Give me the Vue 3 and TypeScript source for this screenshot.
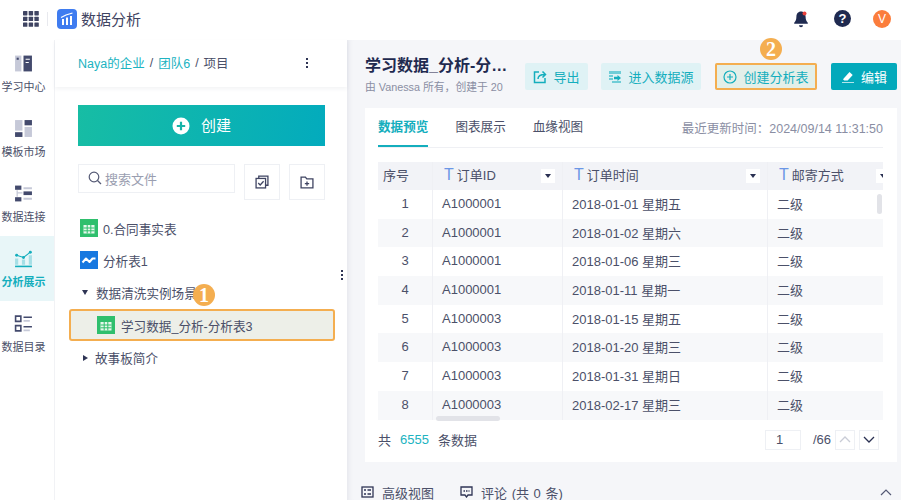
<template>
  <div class="page">
    <header class="topbar">
      <svg class="apps" width="16" height="16" viewBox="0 0 16 16" fill="#3f4462">
        <template v-for="y in [0, 5.7, 11.4]" :key="y">
          <rect v-for="x in [0, 5.7, 11.4]" :key="x" :x="x" :y="y" width="4.4" height="4.4" rx="0.6" />
        </template>
      </svg>
      <span class="top-sep"></span>
      <svg class="logo" width="20" height="20" viewBox="0 0 20 20">
        <rect width="20" height="20" rx="4" fill="#3f7cf0" />
        <path d="M4 8.5 L9 6 L15.5 4" stroke="#fff" stroke-width="1.3" fill="none" />
        <path d="M5 10h2v6H5zM9 8.5h2V16H9zM13 7h2v9h-2z" fill="#fff" />
      </svg>
      <span class="app-name">数据分析</span>
      <div class="top-right">
        <svg class="bell" width="16" height="18" viewBox="0 0 16 18">
          <path d="M8 1.5c-3 0-4.6 2.300-4.600 5.200 0 3.300-1.100 4.800-2.200 6v1h13.600v-1c-1.100-1.200-2.200-2.700-2.200-6C12.600 3.800 11 1.500 8 1.500z" fill="#1f2a50" />
          <path d="M6 15.200h4a2 2 0 0 1-4 0z" fill="#1f2a50" />
          <circle cx="11.500" cy="3.500" r="2" fill="#e8413c" />
        </svg>
        <span class="help">?</span>
        <span class="avatar">V</span>
      </div>
    </header>

    <div class="body">
      <nav class="side">
        <div v-for="n in navItems" :key="n.label" class="nav-item" :class="{ active: n.active }">
          <svg width="19" height="19" viewBox="0 0 18 18" v-html="n.icon"></svg>
          <span>{{ n.label }}</span>
        </div>
      </nav>

      <section class="files">
        <div class="crumbs">
          <span class="link">Naya的企业</span><span class="slash">/</span>
          <span class="link">团队6</span><span class="slash">/</span>
          <span>项目</span>
          <span class="dots"><i></i><i></i><i></i></span>
        </div>

        <button class="create">
          <svg width="18" height="18" viewBox="0 0 18 18">
            <circle cx="9" cy="9" r="8.500" fill="#fff" />
            <path d="M9 4.800v8.400M4.800 9h8.400" stroke="#17b3a8" stroke-width="2.200" />
          </svg>
          <span class="create-text">创建</span>
        </button>

        <div class="tools">
          <div class="search">
            <svg width="14" height="14" viewBox="0 0 14 14" fill="none" stroke="#555a75" stroke-width="1.200">
              <circle cx="6" cy="6" r="4.800" /><path d="M9.500 9.500L13 13" />
            </svg>
            <span>搜索文件</span>
          </div>
          <div class="tool-btn">
            <svg width="14" height="14" viewBox="0 0 13 13" fill="none" stroke="#3f4462" stroke-width="1.200">
              <path d="M3.500 2.800V1h8.500v8.500h-1.800" />
              <rect x="1" y="3.200" width="8.800" height="8.800" />
              <path d="M3 7.500l1.800 1.800L8 5.800" />
            </svg>
          </div>
          <div class="tool-btn">
            <svg width="14" height="13" viewBox="0 0 13 12" fill="none" stroke="#3f4462" stroke-width="1.200">
              <path d="M1 1h4l1.300 1.700H12V11H1z" />
              <path d="M6.500 5v4M4.500 7h4" />
            </svg>
          </div>
        </div>

        <ul class="tree">
          <li class="row file">
            <svg class="sheet" width="18" height="18" viewBox="0 0 18 18" v-html="sheetIcon"></svg>
            <span>0.合同事实表</span>
          </li>
          <li class="row file">
            <svg width="18" height="18" viewBox="0 0 18 18">
              <rect width="18" height="18" fill="#1778e0" />
              <path d="M2.500 11.500L6 7.500l3.500 3.500 3-3.500 3 0" stroke="#fff" stroke-width="2" stroke-linejoin="round" fill="none" />
            </svg>
            <span>分析表1</span>
          </li>
          <li class="row folder">
            <i class="tri down"></i>
            <span class="folder-name">数据清洗实例场景</span>
            <span class="mark mark-one">1</span>
          </li>
          <li class="row picked">
            <svg width="18" height="18" viewBox="0 0 18 18" v-html="sheetIcon"></svg>
            <span>学习数据_分析-分析表3</span>
          </li>
          <li class="row folder">
            <i class="tri right"></i>
            <span class="folder-name">故事板简介</span>
          </li>
        </ul>
        <span class="dots handle"><i></i><i></i><i></i></span>
      </section>

      <main class="detail">
        <div class="head">
          <div class="title-box">
            <h1>学习数据_分析-分析表3</h1>
            <p>由 Vanessa 所有，创建于 2024/09/14</p>
          </div>
          <div class="actions">
            <button class="act">
              <svg width="14" height="14" viewBox="0 0 14 14" fill="none" stroke="#14aebd" stroke-width="1.500">
                <path d="M6 2H1.500v10.500H12V8" /><path d="M5 9c0-3 2-4.500 7-4.500M9.500 1.500l3 3-3 3" />
              </svg>
              导出
            </button>
            <button class="act">
              <svg width="14" height="14" viewBox="0 0 14 14" fill="#14aebd">
                <path d="M1 1h12v3H1zM1 5h4v2H1zM1 8h4v2H1zM4 11h9v2H4z" opacity=".55" />
                <path d="M6 6.800h3.500V5L13 8l-3.500 3V9.200H6z" />
              </svg>
              进入数据源
            </button>
            <button class="act picked-act">
              <svg width="14" height="14" viewBox="0 0 14 14" fill="none" stroke="#14aebd" stroke-width="1.200">
                <circle cx="7" cy="7" r="6" /><path d="M7 4v6M4 7h6" />
              </svg>
              创建分析表
              <span class="mark mark-two">2</span>
            </button>
            <button class="act solid">
              <svg width="14" height="14" viewBox="0 0 14 14" fill="#fff">
                <path d="M8.500 2l3.200 3-5 5.500H3.200L2 9.300z" /><path d="M1 12h12v1H1z" opacity=".7" />
              </svg>
              编辑
            </button>
          </div>
        </div>

        <div class="card">
          <div class="tabs">
            <span v-for="(t, i) in tabs" :key="t" class="tab" :class="{ on: i === 0 }">{{ t }}</span>
            <span class="updated">最近更新时间：2024/09/14 11:31:50</span>
          </div>

          <div class="grid-wrap">
            <div class="line th">
              <div class="cell no">序号</div>
              <div v-for="c in columns" :key="c" class="cell">
                <span class="t-mark">T</span>
                <span>{{ c }}</span>
                <span class="drop"></span>
              </div>
            </div>
            <div v-for="r in rows" :key="r.no" class="line tr">
              <div class="cell no">{{ r.no }}</div>
              <div class="cell">{{ r.id }}</div>
              <div class="cell">{{ r.date }}</div>
              <div class="cell">二级</div>
            </div>
            <span class="bar-y"></span>
            <span class="bar-x"></span>
          </div>

          <div class="pager">
            <span>共</span><b>6555</b><span>条数据</span>
            <div class="pager-right">
              <span class="page-box">1</span>
              <span class="page-total">/66</span>
              <span class="arrow faint"><svg width="12" height="7" viewBox="0 0 12 7" fill="none" stroke="#c9ccd6" stroke-width="1.300"><path d="M1 6l5-5 5 5" /></svg></span>
              <span class="arrow"><svg width="12" height="7" viewBox="0 0 12 7" fill="none" stroke="#2a3052" stroke-width="1.300"><path d="M1 1l5 5 5-5" /></svg></span>
            </div>
          </div>
        </div>

        <div class="foot">
          <svg width="13" height="12" viewBox="0 0 13 12" fill="none" stroke="#2f3555" stroke-width="1.300">
            <rect x="1" y="1" width="11" height="10" /><path d="M3 4h2M6.500 4H10M3 8h2M6.500 8H10" />
          </svg>
          <span>高级视图</span>
          <svg class="foot-second" width="13" height="12" viewBox="0 0 13 12" fill="none" stroke="#2f3555" stroke-width="1.300">
            <path d="M1 1h11v8H8l-1.500 2L5 9H1z" /><path d="M3.500 5h6" stroke-dasharray="1.500 1" />
          </svg>
          <span class="comments">评论 (共 0 条)</span>
          <svg class="foot-up" width="12" height="7" viewBox="0 0 12 7" fill="none" stroke="#555a75" stroke-width="1.200"><path d="M1 6l5-5 5 5" /></svg>
        </div>
      </main>
    </div>
  </div>
</template>

<script setup lang="ts">
const sheetIcon =
  '<rect width="18" height="18" fill="#2fbf6d"/><path d="M3.500 6h11v8.500h-11z" fill="#e6f7ec"/><path d="M3.500 9h11M3.500 11.800h11M7.200 6v8.500M10.800 6v8.500" stroke="#2fbf6d" stroke-width="1"/>'

const navItems = [
  {
    label: '学习中心',
    icon: '<rect x="1" y="1.500" width="6" height="15" fill="#c6c9d8"/><rect x="9" y="1.500" width="8" height="15" fill="#434a6d"/><rect x="2.500" y="3.500" width="2" height="2" fill="#434a6d"/><path d="M11 5h4M11 8h3" stroke="#fff"/>',
  },
  {
    label: '模板市场',
    icon: '<rect x="1" y="1" width="7" height="10" fill="#c6c9d8"/><rect x="10" y="1" width="7" height="5" fill="#434a6d"/><rect x="1" y="12.500" width="7" height="4.500" fill="#434a6d"/><rect x="10" y="7.500" width="7" height="9.500" fill="#c6c9d8"/>',
  },
  {
    label: '数据连接',
    icon: '<rect x="1" y="1.500" width="6" height="4" fill="#434a6d"/><rect x="1" y="12.500" width="6" height="4" fill="#434a6d"/><rect x="9" y="7" width="8" height="3.500" fill="#434a6d"/><path d="M9 3h8v2H9zM9 13h8v2H9z" fill="#c6c9d8"/><path d="M3 6v6M3 8.500h5" stroke="#c6c9d8" stroke-width="1.200" fill="none"/>',
  },
  {
    label: '分析展示',
    active: true,
    icon: '<path d="M1 9h3v6H1zM7.500 10h3v5h-3zM14 6h3v9h-3z" fill="#a5dfe6"/><path d="M1 16.500h16" stroke="#14aebd" stroke-width="1.500"/><path d="M2.500 6L9 8l6.500-5" stroke="#14aebd" fill="none"/><circle cx="2.500" cy="6" r="1.400" fill="#14aebd"/><circle cx="9" cy="8" r="1.400" fill="#14aebd"/><circle cx="15.500" cy="3" r="1.400" fill="#14aebd"/>',
  },
  {
    label: '数据目录',
    icon: '<path d="M1.500 2h5v5h-5zM1.500 11h5v5h-5z" fill="none" stroke="#434a6d" stroke-width="1.500"/><path d="M9 3h8M9 12h8" stroke="#434a6d" stroke-width="1.500"/><path d="M9 6.500h6M9 15.500h6" stroke="#c6c9d8" stroke-width="1.500"/>',
  },
]

const tabs = ['数据预览', '图表展示', '血缘视图']
const columns = ['订单ID', '订单时间', '邮寄方式']

interface OrderRow {
  no: number
  id: string
  date: string
}

const rows: OrderRow[] = [
  { no: 1, id: 'A1000001', date: '2018-01-01 星期五' },
  { no: 2, id: 'A1000001', date: '2018-01-02 星期六' },
  { no: 3, id: 'A1000001', date: '2018-01-06 星期三' },
  { no: 4, id: 'A1000001', date: '2018-01-11 星期一' },
  { no: 5, id: 'A1000003', date: '2018-01-15 星期五' },
  { no: 6, id: 'A1000003', date: '2018-01-20 星期三' },
  { no: 7, id: 'A1000003', date: '2018-01-31 星期日' },
  { no: 8, id: 'A1000003', date: '2018-02-17 星期三' },
]
</script>

<style>
html,
body {
  margin: 0;
  overflow: hidden;
}
</style>

<style scoped>
.page {
  width: 901px;
  height: 500px;
  overflow: hidden;
  font-family: "Liberation Sans", "Noto Sans CJK SC", sans-serif;
  font-size: 13px;
  color: #4b5069;
  background: #fff;
}
.topbar {
  height: 40px;
  display: flex;
  align-items: center;
  padding: 0 10px 3px 23px;
  box-sizing: border-box;
}
.top-sep {
  width: 1px;
  height: 14px;
  margin: 0 9px 0 8px;
  background: #e8e9ee;
}
.logo {
  margin-right: 4px;
}
.app-name {
  font-size: 15px;
  color: #3f4462;
}
.top-right {
  margin-left: auto;
  display: flex;
  align-items: center;
  gap: 22px;
}
.bell {
  margin-right: 3px;
}
.help {
  width: 17px;
  height: 17px;
  border-radius: 50%;
  background: #1f2a50;
  color: #fff;
  font-size: 13px;
  font-weight: 700;
  line-height: 17px;
  text-align: center;
}
.avatar {
  width: 18px;
  height: 18px;
  border-radius: 50%;
  background: #fb7d3c;
  color: #fff;
  font-size: 12px;
  line-height: 18px;
  text-align: center;
}
.body {
  display: flex;
  height: 460px;
}
.side {
  width: 55px;
  flex: none;
  padding-top: 1px;
  border-right: 1px solid #f1f2f5;
  box-sizing: border-box;
}
.nav-item {
  height: 65px;
  padding-right: 7px;
  box-sizing: border-box;
  display: flex;
  flex-direction: column;
  align-items: center;
  justify-content: center;
  gap: 5px;
  font-size: 11px;
  white-space: nowrap;
}
.nav-item.active {
  background: #e8f6f8;
  color: #14aebd;
  font-weight: 700;
}
.files {
  position: relative;
  width: 292px;
  flex: none;
  box-sizing: border-box;
}
.crumbs {
  height: 47px;
  display: flex;
  align-items: center;
  padding: 0 39px 2px 23px;
  box-sizing: border-box;
  box-shadow: 0 2px 4px rgba(40, 50, 90, 0.06);
  font-size: 12.500px;
  color: #4b5069;
}
.link {
  color: #20b3c1;
}
.slash {
  margin: 0 5px;
}
.dots {
  display: flex;
  flex-direction: column;
  gap: 2px;
  margin-left: auto;
}
.dots i {
  width: 2px;
  height: 2px;
  background: #2f3555;
}
.handle {
  position: absolute;
  right: 4px;
  top: 230px;
}
.create {
  display: flex;
  width: 247px;
  height: 41px;
  margin: 18px 0 0 23px;
  align-items: center;
  justify-content: center;
  gap: 11px;
  border: 0;
  background: linear-gradient(100deg, #17bda4, #03abbd);
  color: #fff;
  font: inherit;
  font-size: 15px;
}
.create-text {
  margin-top: -2px;
}
.tools {
  display: flex;
  align-items: flex-start;
  gap: 9px;
  margin: 18px 0 0 23px;
}
.search {
  width: 157px;
  height: 29px;
  display: flex;
  align-items: center;
  gap: 3px;
  padding: 0 0 1px 9px;
  box-sizing: border-box;
  border: 1px solid #eef0f4;
  color: #9a9eb0;
}
.tool-btn {
  width: 36px;
  height: 36px;
  display: flex;
  align-items: center;
  justify-content: center;
  box-sizing: border-box;
  border: 1px solid #eef0f4;
}
.tree {
  list-style: none;
  margin: 12px 0 0;
  padding: 0;
  font-size: 12.600px;
}
.row {
  display: flex;
  align-items: center;
  height: 32px;
  position: relative;
}
.file {
  padding-left: 25px;
  gap: 5px;
}
.folder {
  padding-left: 27px;
  height: 33px;
}
.folder-name {
  margin-left: 8px;
  white-space: nowrap;
}
.tri {
  width: 0;
  height: 0;
  border-style: solid;
}
.tri.down {
  border-width: 5px 3.500px 0;
  border-color: #2f3555 transparent transparent;
}
.tri.right {
  margin-left: 1px;
  margin-right: -1px;
  border-width: 3.500px 0 3.500px 5px;
  border-color: transparent transparent transparent #2f3555;
}
.picked {
  width: 266px;
  margin-left: 14px;
  padding-left: 26px;
  gap: 6px;
  box-sizing: border-box;
  background: #edefe8;
  border: 2px solid #f4ae50;
  border-radius: 3px;
}
.mark {
  position: absolute;
  width: 22px;
  height: 22px;
  border-radius: 50%;
  background: #f4ae50;
  color: #fff;
  font-family: "Liberation Serif", serif;
  font-size: 20px;
  font-weight: 700;
  line-height: 22px;
  text-align: center;
}
.mark-one {
  left: 138px;
  top: 8px;
}
.mark-two {
  left: 45px;
  top: -25px;
}
.detail {
  flex: 1;
  min-width: 0;
  padding: 0 4px 0 18px;
  background: #f5f6f9;
  box-shadow: inset 6px 0 6px -6px rgba(40, 50, 90, 0.12);
}
.head {
  height: 68px;
  display: flex;
  align-items: flex-start;
  padding-top: 13px;
  box-sizing: border-box;
}
.title-box {
  width: 138px;
  flex: none;
  margin-top: 1px;
}
.title-box h1 {
  width: 146px;
  margin: 0;
  overflow: hidden;
  font-size: 16px;
  line-height: 24px;
  font-weight: 700;
  color: #1f2a50;
  white-space: nowrap;
  text-overflow: ellipsis;
}
.title-box p {
  margin: 2px 0 0;
  overflow: hidden;
  font-size: 10.800px;
  line-height: 14px;
  color: #8a8ea3;
  white-space: nowrap;
}
.actions {
  display: flex;
  gap: 14px;
  margin-left: 22px;
  margin-top: 10px;
}
.act {
  position: relative;
  height: 27px;
  display: flex;
  align-items: center;
  justify-content: center;
  gap: 6px;
  padding: 0;
  border: 0;
  border-radius: 2px;
  background: #dff2f5;
  color: #14aebd;
  font: inherit;
  font-size: 13px;
  white-space: nowrap;
}
.act:nth-child(1) {
  width: 63px;
  margin-right: -1px;
}
.act:nth-child(2) {
  width: 100px;
}
.act:nth-child(3) {
  width: 102px;
}
.act:nth-child(4) {
  width: 66px;
}
.picked-act {
  background: #e3efe9;
  box-shadow: 0 0 0 2px #f4ae50 inset;
}
.solid {
  background: #03a9bb;
  color: #fff;
}
.card {
  height: 354px;
  padding: 0 14px 0 13px;
  box-sizing: border-box;
  background: #fff;
}
.tabs {
  height: 39px;
  display: flex;
  align-items: center;
  border-bottom: 1px solid #eff0f4;
  gap: 27px;
}
.tab {
  height: 39px;
  line-height: 39px;
  box-sizing: border-box;
  font-size: 12.600px;
}
.tab.on {
  color: #14aebd;
  font-weight: 700;
  border-bottom: 2px solid #14aebd;
}
.updated {
  margin-left: auto;
  font-size: 12.500px;
  color: #8a8ea3;
}
.grid-wrap {
  position: relative;
  height: 259px;
  margin-top: 14px;
  overflow: hidden;
}
.line {
  display: grid;
  grid-template-columns: 55px 130px 205px 130px;
}
.th {
  height: 28px;
  background: #f2f3f7;
  color: #4b5069;
}
.tr {
  height: 28.700px;
}
.tr:nth-child(odd) {
  background: #f7f8fa;
}
.cell {
  display: flex;
  align-items: center;
  padding: 0 0 2px 9px;
  position: relative;
  border-right: 1px solid #eff0f4;
  white-space: nowrap;
  box-sizing: border-box;
}
.tr .cell.no {
  justify-content: center;
  padding-left: 0;
}
.cell.no {
  padding-left: 5px;
}
.th .cell {
  gap: 3px;
  padding-bottom: 4px;
}
.th .cell:not(.no) {
  padding-left: 11px;
}
.t-mark {
  margin-top: 2px;
  color: #6b96e6;
  font-size: 16px;
}
.drop {
  position: absolute;
  right: 7px;
  top: 7px;
  width: 14px;
  height: 14px;
  background: #fff;
}
.drop::after {
  content: "";
  position: absolute;
  left: 3.500px;
  top: 5px;
  border-style: solid;
  border-width: 4px 3.500px 0;
  border-color: #2a3052 transparent transparent;
}
.bar-y {
  position: absolute;
  right: 1px;
  top: 32px;
  width: 5px;
  height: 20px;
  border-radius: 3px;
  background: #e2e3e8;
}
.bar-x {
  position: absolute;
  left: 58px;
  bottom: 0;
  width: 64px;
  height: 5px;
  border-radius: 3px;
  background: #e2e3e8;
}
.pager {
  height: 40px;
  padding-bottom: 3px;
  box-sizing: border-box;
  display: flex;
  align-items: center;
  gap: 9px;
}
.pager b {
  font-weight: 400;
  color: #20b3c1;
}
.pager-right {
  margin-left: auto;
  margin-right: 4px;
  display: flex;
  align-items: center;
}
.page-box {
  width: 36px;
  height: 20px;
  padding-left: 10px;
  box-sizing: border-box;
  border: 1px solid #eef0f4;
  line-height: 18px;
}
.page-total {
  margin: 0 4px 0 12px;
}
.arrow {
  width: 20px;
  height: 20px;
  margin-left: 4px;
  display: flex;
  align-items: center;
  justify-content: center;
  box-sizing: border-box;
  border: 1px solid #eef0f4;
}
.arrow.faint {
  margin-left: 0;
}
.foot {
  height: 18px;
  margin: 21px 0 0 -4px;
  display: flex;
  align-items: center;
  gap: 8px;
  color: #4b5069;
}
.foot-second {
  margin-left: 18px;
}
.comments {
  word-spacing: 1px;
}
.foot-up {
  margin-left: auto;
  margin-right: 5px;
}
</style>
